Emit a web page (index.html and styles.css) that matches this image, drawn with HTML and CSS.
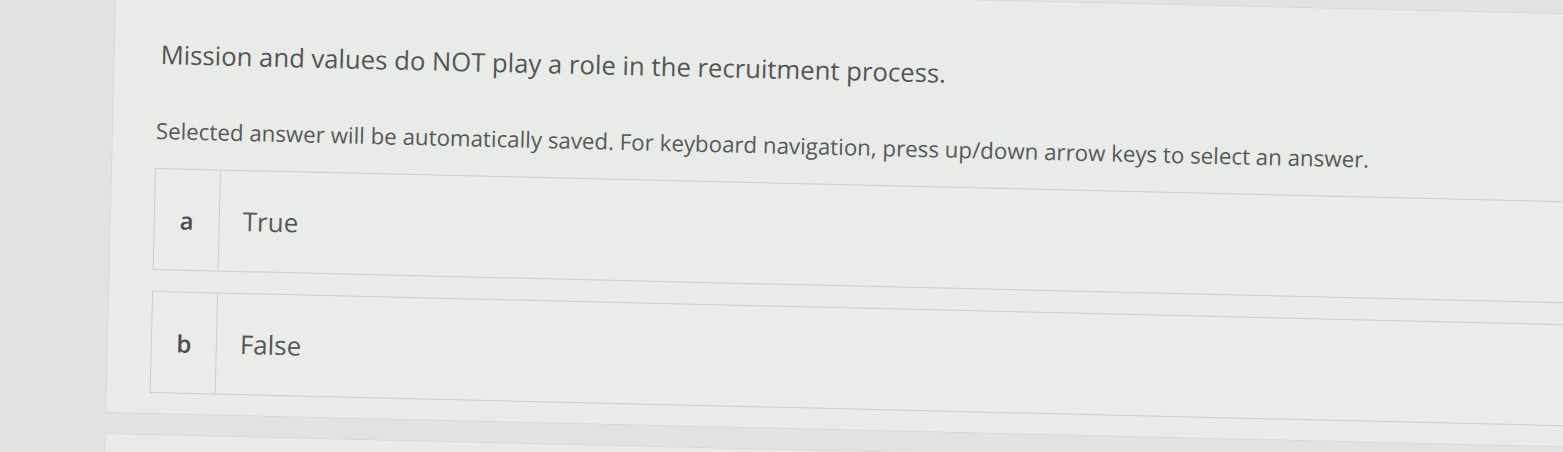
FILE: index.html
```html
<!DOCTYPE html>
<html lang="en">
<head>
<meta charset="utf-8">
<title>Question</title>
<link rel="stylesheet" href="styles.css">
</head>
<body>
<div class="page">
  <section class="card">
    <h2 class="question">Mission and values do NOT play a role in the recruitment process.</h2>
    <p class="hint">Selected answer will be automatically saved. For keyboard navigation, press up/down arrow keys to select an answer.</p>
    <div class="options">
      <div class="option">
        <div class="letter">a</div>
        <div class="label">True</div>
      </div>
      <div class="option">
        <div class="letter">b</div>
        <div class="label">False</div>
      </div>
    </div>
  </section>
  <section class="card next"></section>
</div>
</body>
</html>
```

FILE: styles.css
```css
html, body {
  margin: 0;
  padding: 0;
}
body {
  background: #e1e3e1;
  width: 1563px;
  height: 452px;
  overflow: hidden;
  font-family: "Open Sans", "Noto Sans", sans-serif;
  color: #555756;
}
.page {
  width: 1800px;
  padding-left: 111px;
  margin-top: -20px;
  transform: rotate(1.35deg);
  transform-origin: 155px 188px;
  display: flex;
  flex-direction: column;
  gap: 20px;
}
.card {
  background: #e9ebe9;
  border: 1px solid #d7d9d7;
  padding: 0 0 20px 43px;
}
.question {
  margin: 56px 0 0 3px;
  font-size: 25.7px;
  line-height: 36px;
  font-weight: 400;
  color: #535554;
}
.hint {
  margin: 43px 0 0 0;
  font-size: 22.3px;
  line-height: 30px;
  color: #575958;
}
.options {
  margin-top: 22px;
  display: flex;
  flex-direction: column;
  gap: 21px;
}
.option {
  display: flex;
  height: 100px;
  border: 1px solid #cbcdcb;
  background: #eaecea;
}
.letter {
  width: 64px;
  border-right: 1px solid #cbcdcb;
  display: flex;
  align-items: center;
  justify-content: center;
  font-size: 24px;
  font-weight: 600;
  color: #4b4d4c;
}
.label {
  display: flex;
  align-items: center;
  padding-left: 23px;
  font-size: 26px;
  color: #555756;
}
.next {
  height: 60px;
  padding: 0;
}
```
